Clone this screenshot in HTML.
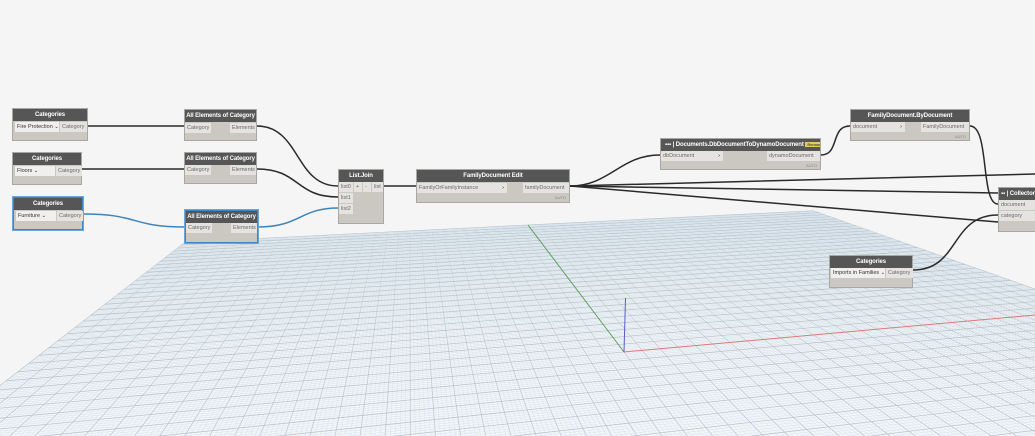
<!DOCTYPE html>
<html><head><meta charset="utf-8">
<style>
html,body{margin:0;padding:0}
body{width:1035px;height:436px;overflow:hidden;background:#f5f5f5;position:relative;font-family:"Liberation Sans",sans-serif}
svg{position:absolute;left:0;top:0}
.n{position:absolute;background:#cbc8c2;border:1px solid #a9a7a2;box-sizing:border-box}
.n.sel{border:1px solid #3d86c6;box-shadow:0 0 0 1px #6aa6da}
.h{background:#565656;color:#fff;font-weight:bold;font-size:6px;letter-spacing:-0.1px;text-align:center;height:12px;line-height:12px;white-space:nowrap;overflow:hidden}
.p{position:absolute;background:#e5e3df;color:#6a6a6a;font-size:5.5px;height:10px;line-height:10px;padding:0 2px;box-sizing:border-box;white-space:nowrap;overflow:hidden}
.a{position:absolute;font-size:4px;color:#888}
</style></head><body>
<svg id="g" width="1035" height="436"></svg>
<svg width="1035" height="436" fill="none" stroke-linecap="round">
<g stroke="#2a2a2a" stroke-width="1.5">
<path d="M88 126 L184 126"/>
<path d="M82 169 L184 169"/>
<path d="M257 126 C300 126,295 186,338 186"/>
<path d="M257 169 C300 169,295 197,338 197"/>
<path d="M384 186 L416 186"/>
<path d="M570 186 C610 186,620 155,660 155"/>
<path d="M570 186 L1035 174"/>
<path d="M570 186 L998 193"/>
<path d="M570 186 L998 222"/>
<path d="M821 155 C840 155,830 126,850 126"/>
<path d="M970 126 C990 126,980 204,998 204"/>
<path d="M913 270 C960 270,950 215,998 215"/>
</g>
<g stroke="#3a85c0" stroke-width="1.5">
<path d="M83 214 C140 214,130 227,185 227"/>
<path d="M258 227 C300 227,300 208,338 208"/>
</g>
</svg>

<div class="n" style="left:12px;top:108px;width:76px;height:33px"><div class="h">Categories</div>
<div class="p" style="left:2px;top:13px;width:44px;background:#f0efed;color:#333">Fire Protection ⌄</div><div class="p" style="left:47px;top:13px;width:27px">Category</div></div>
<div class="n" style="left:12px;top:152px;width:70px;height:33px"><div class="h">Categories</div>
<div class="p" style="left:2px;top:13px;width:40px;background:#f0efed;color:#333">Floors ⌄</div><div class="p" style="left:43px;top:13px;width:26px">Category</div></div>
<div class="n sel" style="left:13px;top:197px;width:70px;height:33px"><div class="h">Categories</div>
<div class="p" style="left:2px;top:13px;width:40px;background:#f0efed;color:#333">Furniture ⌄</div><div class="p" style="left:43px;top:13px;width:26px">Category</div></div>

<div class="n" style="left:184px;top:109px;width:73px;height:32px"><div class="h">All Elements of Category</div>
<div class="p" style="left:0;top:13px;width:26px">Category</div><div class="p" style="right:0;top:13px;width:26px">Elements</div></div>
<div class="n" style="left:184px;top:152px;width:73px;height:32px"><div class="h">All Elements of Category</div>
<div class="p" style="left:0;top:12px;width:26px">Category</div><div class="p" style="right:0;top:12px;width:26px">Elements</div></div>
<div class="n sel" style="left:185px;top:210px;width:73px;height:33px"><div class="h">All Elements of Category</div>
<div class="p" style="left:0;top:12px;width:26px">Category</div><div class="p" style="right:0;top:12px;width:26px">Elements</div></div>

<div class="n" style="left:338px;top:169px;width:46px;height:55px"><div class="h">List.Join</div>
<div class="p" style="left:0;top:12px;width:14px">list0</div><div class="p" style="left:15px;top:12px;width:8px">+</div><div class="p" style="left:24px;top:12px;width:8px">-</div><div class="p" style="right:0;top:12px;width:11px">list</div>
<div class="p" style="left:0;top:23px;width:14px">list1</div><div class="p" style="left:0;top:34px;width:14px">list2</div></div>

<div class="n" style="left:416px;top:169px;width:154px;height:34px"><div class="h">FamilyDocument Edit</div>
<div class="p" style="left:0;top:13px;width:90px">FamilyOrFamilyInstance<span style="position:absolute;right:3px;color:#222">›</span></div><div class="p" style="right:0;top:13px;width:46px">familyDocument</div><div class="a" style="right:3px;top:25px">AUTO</div></div>

<div class="n" style="left:660px;top:138px;width:161px;height:32px"><div class="h" style="text-align:left;padding-left:4px">▪▪▪ | Documents.DbDocumentToDynamoDocument <span style="background:#e8c860;color:#553;font-size:4px;padding:0 2px">Renamed</span></div>
<div class="p" style="left:0;top:12px;width:62px">dbDocument<span style="position:absolute;right:3px;color:#222">›</span></div><div class="p" style="right:0;top:12px;width:53px">dynamoDocument</div><div class="a" style="right:3px;top:24px">AUTO</div></div>

<div class="n" style="left:850px;top:109px;width:120px;height:32px"><div class="h">FamilyDocument.ByDocument</div>
<div class="p" style="left:0;top:12px;width:54px">document<span style="position:absolute;right:3px;color:#222">›</span></div><div class="p" style="right:0;top:12px;width:48px">FamilyDocument</div><div class="a" style="right:3px;top:24px">AUTO</div></div>

<div class="n" style="left:998px;top:187px;width:40px;height:45px"><div class="h" style="text-align:left;padding-left:2px">▪▪ | Collector</div>
<div class="p" style="left:0;top:12px;width:40px">document</div><div class="p" style="left:0;top:23px;width:40px">category</div></div>

<div class="n" style="left:829px;top:255px;width:84px;height:33px"><div class="h">Categories</div>
<div class="p" style="left:1px;top:12px;width:54px;background:#f0efed;color:#333">Imports in Families ⌄</div><div class="p" style="left:56px;top:12px;width:27px">Category</div></div>

<script>
(function(){
var a=0.1663,b=0.81;
var H=[[a*3917,b*409.5,624],[a*55.6,b*68.3,352],[a,b,1]];
function P(u,v){var w=H[2][0]*u+H[2][1]*v+1;return [(H[0][0]*u+H[0][1]*v+H[0][2])/w,(H[1][0]*u+H[1][1]*v+H[1][2])/w];}
function f(p){return p[0].toFixed(1)+','+p[1].toFixed(1);}
var wmin=0.06;
function vlow(u){return (wmin-1-a*u)/b;}
var s='<polygon fill="#f3f6f8" points="'+f(P(-1,1))+' '+f(P(1,1))+' '+f(P(1,vlow(1)))+' '+f(P(-1,vlow(-1)))+'"/>';
var N=300,st=2/N;
for(var i=0;i<=N;i++){var u=-1+i*st;var maj=i%5==0;var p1=P(u,1),p2=P(u,vlow(u));
s+='<line x1="'+p1[0].toFixed(1)+'" y1="'+p1[1].toFixed(1)+'" x2="'+p2[0].toFixed(1)+'" y2="'+p2[1].toFixed(1)+'" stroke="'+(maj?'#bcc5cc':'#d7e3ec')+'" stroke-width="'+(maj?0.8:0.5)+'"/>';}
for(var j=0;j<=600;j++){var v=1-j*st;var maj=j%5==0;
var w1=-a+b*v+1,w2=a+b*v+1;if(w2<wmin)break;
var u1=-1;if(w1<wmin){u1=(wmin-1-b*v)/a;}
var p1=P(u1,v),p2=P(1,v);
if(p1[1]>470&&p2[1]>470)break;
s+='<line x1="'+p1[0].toFixed(1)+'" y1="'+p1[1].toFixed(1)+'" x2="'+p2[0].toFixed(1)+'" y2="'+p2[1].toFixed(1)+'" stroke="'+(maj?'#bcc5cc':'#d7e3ec')+'" stroke-width="'+(maj?0.8:0.5)+'"/>';}
var o=P(0,0),g=P(0,1),r=P(1,0);
s+='<line x1="'+o[0]+'" y1="'+o[1]+'" x2="'+g[0]+'" y2="'+g[1]+'" stroke="#5f9e5f" stroke-width="1"/>';
s+='<line x1="'+o[0]+'" y1="'+o[1]+'" x2="'+r[0]+'" y2="'+r[1]+'" stroke="#e07a7a" stroke-width="1"/>';
s+='<line x1="624" y1="352" x2="625.5" y2="298" stroke="#5a5ad0" stroke-width="1"/>';
document.getElementById('g').innerHTML=s;
})();
</script>
</body></html>
